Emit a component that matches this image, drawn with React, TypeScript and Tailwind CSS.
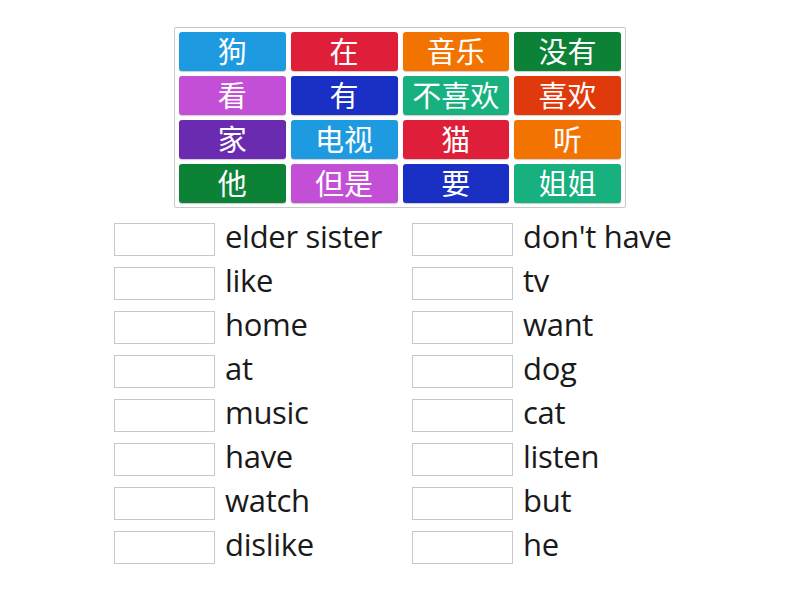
import React from "react";

const tiles: { t: string; c: string }[] = [
  { t: "狗", c: "bg-[#1e9be0]" },
  { t: "在", c: "bg-[#df1f3a]" },
  { t: "音乐", c: "bg-[#f37300]" },
  { t: "没有", c: "bg-[#0b8236]" },
  { t: "看", c: "bg-[#c34fd6]" },
  { t: "有", c: "bg-[#1a2fc4]" },
  { t: "不喜欢", c: "bg-[#17b07f]" },
  { t: "喜欢", c: "bg-[#e0390b]" },
  { t: "家", c: "bg-[#6b2bb0]" },
  { t: "电视", c: "bg-[#1e9be0]" },
  { t: "猫", c: "bg-[#df1f3a]" },
  { t: "听", c: "bg-[#f37300]" },
  { t: "他", c: "bg-[#0b8236]" },
  { t: "但是", c: "bg-[#c34fd6]" },
  { t: "要", c: "bg-[#1a2fc4]" },
  { t: "姐姐", c: "bg-[#17b07f]" },
];

const left = ["elder sister", "like", "home", "at", "music", "have", "watch", "dislike"];
const right = ["don't have", "tv", "want", "dog", "cat", "listen", "but", "he"];

function Row({ label }: { label: string }) {
  return (
    <div className="flex items-center h-[33px]">
      <div className="w-[101px] h-[33px] border border-[#c8c8c8] bg-white shrink-0" />
      <span className="ml-[10px] text-[31px] tracking-[-0.3px] leading-none text-[#1a1a1a] -mt-[6px]">{label}</span>
    </div>
  );
}

export default function App() {
  return (
    <div
      className="w-[800px] h-[600px] bg-white"
      style={{ fontFamily: '"Open Sans", "Noto Sans CJK SC", sans-serif' }}
    >
      <div className="pt-[27px] flex justify-center">
        <div className="w-[452px] border border-[#c9c9c9] rounded-[2px] p-[4px] grid grid-cols-4 gap-x-[5px] gap-y-[5px] bg-white">
          {tiles.map((x, i) => (
            <div
              key={i}
              className={`${x.c} h-[39px] rounded-[3px] flex items-center justify-center text-white text-[29px] leading-none shadow-[0_1px_1px_rgba(0,0,0,0.2)]`}
              style={{ fontFamily: '"Noto Sans CJK SC", sans-serif' }}
            >
              <span className="-mt-[2px]">{x.t}</span>
            </div>
          ))}
        </div>
      </div>
      <div className="mt-[15px] pl-[114px] grid grid-cols-[298px_298px]">
        <div className="flex flex-col gap-[11px]">
          {left.map((l) => (
            <Row key={l} label={l} />
          ))}
        </div>
        <div className="flex flex-col gap-[11px]">
          {right.map((l) => (
            <Row key={l} label={l} />
          ))}
        </div>
      </div>
    </div>
  );
}
